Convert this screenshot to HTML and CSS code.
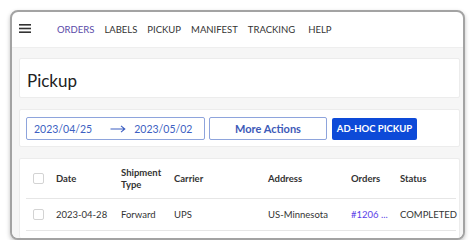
FILE: index.html
```html
<!DOCTYPE html>
<html>
<head>
<meta charset="utf-8">
<link rel="stylesheet" href="styles.css">
</head>
<body>
<div class="window">
  <header class="topbar">
    <svg class="menu" width="12" height="9" viewBox="0 0 12 9"><rect x="0" y="0" width="12" height="1.6" fill="#333"/><rect x="0" y="3.7" width="12" height="1.6" fill="#333"/><rect x="0" y="7.4" width="12" height="1.6" fill="#333"/></svg>
    <nav class="nav">
      <span class="nav-item active">ORDERS</span>
      <span class="nav-item">LABELS</span>
      <span class="nav-item">PICKUP</span>
      <span class="nav-item">MANIFEST</span>
      <span class="nav-item">TRACKING</span>
      <span class="nav-item help">HELP</span>
    </nav>
  </header>
  <main class="content">
    <section class="card title-card"><h1 class="title">Pickup</h1></section>
    <section class="card toolbar">
      <div class="range">
        <span class="date">2023/04/25</span>
        <svg class="arrow" width="16" height="8" viewBox="0 0 16 8"><path d="M0.5 4H14.5M11 0.8L14.8 4L11 7.2" fill="none" stroke="#3d5fc2" stroke-width="1.1"/></svg>
        <span class="date">2023/05/02</span>
      </div>
      <button class="btn outline">More Actions</button>
      <button class="btn primary">AD-HOC PICKUP</button>
    </section>
    <section class="card table-card">
      <div class="row head">
        <span class="cell check"><span class="box"></span></span>
        <span class="cell c-date">Date</span>
        <span class="cell c-type">Shipment<br>Type</span>
        <span class="cell c-carrier">Carrier</span>
        <span class="cell c-addr">Address</span>
        <span class="cell c-orders">Orders</span>
        <span class="cell c-status">Status</span>
      </div>
      <div class="row">
        <span class="cell check"><span class="box"></span></span>
        <span class="cell c-date">2023-04-28</span>
        <span class="cell c-type">Forward</span>
        <span class="cell c-carrier">UPS</span>
        <span class="cell c-addr">US-Minnesota</span>
        <span class="cell c-orders link">#1206 ...</span>
        <span class="cell c-status">COMPLETED</span>
      </div>
    </section>
  </main>
</div>
</body>
</html>
```
FILE: styles.css
```css
* { box-sizing: border-box; }
html, body { margin: 0; padding: 0; background: #fff; }
body { font-family: Lato, "Open Sans", sans-serif; color: #333; }
.window {
  margin: 10px 9px 0 10px;
  height: 230px;
  border: 2px solid #a3a3a3;
  border-radius: 8px;
  box-shadow: 0 2px 4px rgba(0,0,0,0.25);
  overflow: hidden;
  background: #fff;
  display: flex;
  flex-direction: column;
}
.topbar {
  height: 36px;
  display: flex;
  align-items: center;
  padding-left: 7px;
  border-bottom: 1px solid #eee;
  flex-shrink: 0;
}
.menu { display: block; margin-top: -2px; }
.nav { display: flex; gap: 10px; margin-left: 26px; font-size: 9.5px; }
.nav-item { color: #333; }
.nav-item.active { color: #5a4aa8; }
.nav-item.help { margin-left: 3px; }
.content {
  flex: 1;
  background: #f6f6f6;
  padding: 10px 3px 0 7px;
  display: flex;
  flex-direction: column;
  gap: 11px;
}
.card { background: #fff; border: 1px solid #ececec; border-radius: 2px; }
.title-card { height: 40px; display: flex; align-items: center; padding: 5px 0 0 7px; }
.title { margin: 0; font-size: 17px; font-weight: 400; color: #222; }
.toolbar { height: 38px; display: flex; align-items: center; padding: 1px 0 0 6px; gap: 4px; }
.range {
  width: 179px; height: 23px;
  border: 1px solid #8ea4dc; border-radius: 2px;
  display: flex; align-items: center; padding-left: 7px;
  color: #3d5fc2; font-size: 10.5px;
}
.arrow { margin: 0 8px 0 18px; }
.btn { font-family: inherit; cursor: pointer; border-radius: 2px; padding: 0; white-space: nowrap; }
.btn.outline {
  width: 118px; height: 23px; background: #fff;
  border: 1px solid #8ea4dc; color: #3d5ab8; font-size: 11px; font-weight: 700;
}
.btn.primary {
  margin-left: 1px;
  width: 85px; height: 22px; background: #0d4ad8; border: none; color: #fff;
  font-size: 9.5px; font-weight: 700;
}
.table-card { flex: 1; padding: 0 3px 0 6px; border-bottom: none; }
.row { display: flex; align-items: center; border-bottom: 1px solid #e6e6e6; font-size: 9.5px; color: #333; }
.row.head { height: 40px; font-weight: 700; color: #333; line-height: 12px; }
.row:not(.head) { height: 32px; }
.cell { flex-shrink: 0; }
.check { width: 30px; padding-left: 7px; display: flex; }
.box { width: 11px; height: 11px; border: 1px solid #d3d3d3; border-radius: 2px; background: #fff; }
.c-date { width: 65px; }
.c-type { width: 53px; }
.c-carrier { width: 94px; }
.c-addr { width: 83px; }
.c-orders { width: 49px; }
.link { color: #5a3ee8; }
.c-status { width: 60px; }
```
